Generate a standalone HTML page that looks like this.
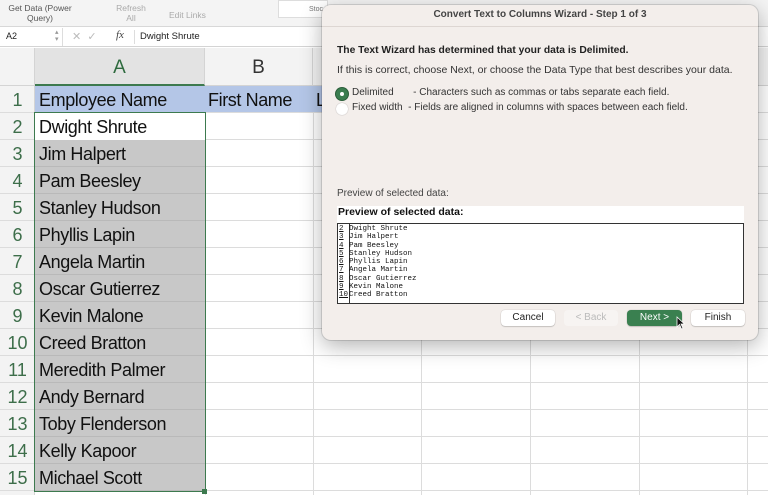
<!DOCTYPE html>
<html><head><style>
*{margin:0;padding:0;box-sizing:border-box}
body{width:768px;height:495px;overflow:hidden;background:#fff;font-family:"Liberation Sans",sans-serif;position:relative}
.abs{position:absolute}
.cell{position:absolute;font-family:"Liberation Sans",sans-serif;font-size:18px;letter-spacing:-0.4px;color:#111;line-height:29px;white-space:nowrap}
.rn{position:absolute;left:0;width:35px;text-align:center;font-family:"Liberation Sans",sans-serif;font-size:18px;color:#3d6e4a;line-height:29px}
.pv{font-family:"Liberation Mono",monospace;font-size:7.5px;line-height:8.3px;color:#111;white-space:pre}
.btn{position:absolute;top:310px;height:16px;border-radius:4px;background:#fff;font-size:10px;text-align:center;line-height:16px;color:#222;box-shadow:0 0 1px rgba(0,0,0,.3),0 1px 1px rgba(0,0,0,.15)}
</style></head><body>
<div class="abs" style="left:0;top:0;width:768px;height:27px;background:#f4f4f4;border-bottom:1px solid #d8d8d8"></div>
<div class="abs" style="left:0px;top:3px;font-size:8.5px;color:#555;text-align:center;width:80px;line-height:10px;white-space:nowrap">Get Data (Power<br>Query)</div>
<div class="abs" style="left:106px;top:3px;font-size:8.5px;color:#aaa;text-align:center;width:50px;line-height:10px">Refresh<br>All</div>
<div class="abs" style="left:169px;top:10px;font-size:8.5px;color:#aaa">Edit Links</div>
<div class="abs" style="left:278px;top:0;width:50px;height:18px;background:#fff;border:1px solid #ddd;font-size:7px;color:#777;padding:5px 0 0 30px">Stoc</div>
<div class="abs" style="left:0;top:27px;width:768px;height:20px;background:#fff;border-bottom:1px solid #d4d4d4"></div>
<div class="abs" style="left:6px;top:31px;font-size:9px;color:#222">A2</div>
<div class="abs" style="left:55px;top:29px;font-size:7px;color:#999;line-height:7px">▴<br>▾</div>
<div class="abs" style="left:62px;top:28px;width:1px;height:18px;background:#ddd"></div>
<div class="abs" style="left:72px;top:30px;font-size:11px;color:#bbb">✕ &nbsp;✓</div>
<div class="abs" style="left:116px;top:29px;font-size:11px;color:#444;font-family:'Liberation Serif',serif;font-style:italic">fx</div>
<div class="abs" style="left:134px;top:30px;width:1px;height:14px;background:#ddd"></div>
<div class="abs" style="left:140px;top:31px;font-size:9.5px;color:#222">Dwight Shrute</div>
<div class="abs" style="left:0;top:48px;width:768px;height:38px;background:#f3f3f3;border-bottom:1px solid #d4d4d4"></div>
<div class="abs" style="left:0;top:48px;width:35px;height:38px;border-right:1px solid #d4d4d4"></div>
<div class="abs" style="left:35px;top:48px;width:170px;height:38px;background:#e3e3e3;border-bottom:2px solid #3d7a4f;border-right:1px solid #d4d4d4;text-align:center;line-height:40px;font-size:19px;color:#2f6b3f">A</div>
<div class="abs" style="left:205px;top:48px;width:108px;height:38px;border-right:1px solid #d4d4d4;text-align:center;line-height:40px;font-size:19px;color:#333">B</div>
<div class="abs" style="left:0;top:86px;width:35px;height:409px;background:#f3f3f3;border-right:1px solid #d4d4d4"></div>
<svg class="abs" style="left:0;top:86px" width="768" height="409">
<g stroke="#dcdcdc" stroke-width="1">
<line x1="313.5" y1="0" x2="313.5" y2="409"/><line x1="421.5" y1="0" x2="421.5" y2="409"/><line x1="530.5" y1="0" x2="530.5" y2="409"/><line x1="639.5" y1="0" x2="639.5" y2="409"/><line x1="747.5" y1="0" x2="747.5" y2="409"/><line x1="205.5" y1="0" x2="205.5" y2="409"/>
<line x1="0" y1="26.5" x2="768" y2="26.5"/><line x1="0" y1="53.5" x2="768" y2="53.5"/><line x1="0" y1="80.5" x2="768" y2="80.5"/><line x1="0" y1="107.5" x2="768" y2="107.5"/><line x1="0" y1="134.5" x2="768" y2="134.5"/><line x1="0" y1="161.5" x2="768" y2="161.5"/><line x1="0" y1="188.5" x2="768" y2="188.5"/><line x1="0" y1="215.5" x2="768" y2="215.5"/><line x1="0" y1="242.5" x2="768" y2="242.5"/><line x1="0" y1="269.5" x2="768" y2="269.5"/><line x1="0" y1="296.5" x2="768" y2="296.5"/><line x1="0" y1="323.5" x2="768" y2="323.5"/><line x1="0" y1="350.5" x2="768" y2="350.5"/><line x1="0" y1="377.5" x2="768" y2="377.5"/><line x1="0" y1="404.5" x2="768" y2="404.5"/>
</g></svg>
<div class="abs" style="left:35px;top:86px;width:300px;height:26px;background:#b4c6e7"></div>
<div class="abs" style="left:35px;top:113px;width:170px;height:27px;background:#fff"></div>
<div class="abs" style="left:35px;top:140px;width:170px;height:351px;background:repeating-linear-gradient(#c8c8c8 0 26px,#b9b9b9 26px 27px)"></div>
<div class="abs" style="left:34px;top:112px;width:172px;height:380px;border:1.5px solid #3d7a4f"></div>
<div class="abs" style="left:202px;top:489px;width:5px;height:5px;background:#3d7a4f"></div>

<div class="rn" style="top:86px">1</div><div class="rn" style="top:113px">2</div><div class="rn" style="top:140px">3</div><div class="rn" style="top:167px">4</div><div class="rn" style="top:194px">5</div><div class="rn" style="top:221px">6</div><div class="rn" style="top:248px">7</div><div class="rn" style="top:275px">8</div><div class="rn" style="top:302px">9</div><div class="rn" style="top:329px">10</div><div class="rn" style="top:356px">11</div><div class="rn" style="top:383px">12</div><div class="rn" style="top:410px">13</div><div class="rn" style="top:437px">14</div><div class="rn" style="top:464px">15</div>

<div class="cell" style="left:39px;top:86px">Employee Name</div>
<div class="cell" style="left:208px;top:86px">First Name</div>
<div class="cell" style="left:316px;top:86px">L</div>
<div class="cell" style="left:39px;top:113px">Dwight Shrute</div>
<div class="cell" style="left:39px;top:140px">Jim Halpert</div>
<div class="cell" style="left:39px;top:167px">Pam Beesley</div>
<div class="cell" style="left:39px;top:194px">Stanley Hudson</div>
<div class="cell" style="left:39px;top:221px">Phyllis Lapin</div>
<div class="cell" style="left:39px;top:248px">Angela Martin</div>
<div class="cell" style="left:39px;top:275px">Oscar Gutierrez</div>
<div class="cell" style="left:39px;top:302px">Kevin Malone</div>
<div class="cell" style="left:39px;top:329px">Creed Bratton</div>
<div class="cell" style="left:39px;top:356px">Meredith Palmer</div>
<div class="cell" style="left:39px;top:383px">Andy Bernard</div>
<div class="cell" style="left:39px;top:410px">Toby Flenderson</div>
<div class="cell" style="left:39px;top:437px">Kelly Kapoor</div>
<div class="cell" style="left:39px;top:464px">Michael Scott</div>

<div class="abs" style="left:322px;top:5px;width:436px;height:335px;background:#f3eeeb;border-radius:9px;box-shadow:0 6px 22px rgba(0,0,0,.3),0 0 0 1px rgba(0,0,0,.12)"></div>
<div class="abs" style="left:322px;top:26px;width:436px;height:1px;background:#ddd6d2"></div>
<div class="abs" style="left:322px;top:9px;width:436px;text-align:center;font-size:10px;font-weight:bold;color:#444">Convert Text to Columns Wizard - Step 1 of 3</div>
<div class="abs" style="left:337px;top:45px;font-size:10.3px;font-weight:bold;color:#222;white-space:nowrap">The Text Wizard has determined that your data is Delimited.</div>
<div class="abs" style="left:337px;top:64px;font-size:10.5px;color:#333;white-space:nowrap">If this is correct, choose Next, or choose the Data Type that best describes your data.</div>
<div class="abs" style="left:336px;top:88px;width:12px;height:12px;border-radius:50%;background:#3a7d4f;box-shadow:0 0 0 1px #2b5e3a"></div>
<div class="abs" style="left:340px;top:92px;width:4px;height:4px;border-radius:50%;background:#fff"></div>
<div class="abs" style="left:336px;top:103px;width:12px;height:12px;border-radius:50%;background:#fff;box-shadow:0 0 1px rgba(0,0,0,.4)"></div>
<div class="abs" style="left:352px;top:87px;font-size:10px;color:#333;white-space:pre">Delimited       - Characters such as commas or tabs separate each field.</div>
<div class="abs" style="left:352px;top:102px;font-size:10px;color:#333;white-space:pre">Fixed width  - Fields are aligned in columns with spaces between each field.</div>
<div class="abs" style="left:337px;top:188px;font-size:10px;color:#444">Preview of selected data:</div>
<div class="abs" style="left:337px;top:206px;width:407px;height:17px;background:#fff"></div>
<div class="abs" style="left:338px;top:206px;font-size:10.5px;font-weight:bold;color:#111">Preview of selected data:</div>
<div class="abs" style="left:337px;top:223px;width:407px;height:81px;background:#fff;border:1px solid #333;overflow:hidden">
<div class="abs" style="left:0;top:0;width:12px;height:80px;border-right:1px solid #333"></div>
<div class="pv abs" style="left:1px;top:1px;text-decoration:underline">2
3
4
5
6
7
8
9
10</div>
<div class="pv abs" style="left:11px;top:1px">Dwight Shrute
Jim Halpert
Pam Beesley
Stanley Hudson
Phyllis Lapin
Angela Martin
Oscar Gutierrez
Kevin Malone
Creed Bratton</div>
</div>
<div class="btn" style="left:501px;width:54px">Cancel</div>
<div class="btn" style="left:564px;width:54px;color:#bbb;background:#f7f4f2;box-shadow:none">&lt; Back</div>
<div class="btn" style="left:627px;width:55px;background:#3a8050;color:#fff">Next &gt;</div>
<div class="btn" style="left:691px;width:54px">Finish</div>
<svg class="abs" style="left:676px;top:316px" width="10" height="14"><path d="M1 1 L1 11 L3.5 8.5 L5.5 13 L7 12.3 L5 8 L8.5 8 Z" fill="#111" stroke="#fff" stroke-width=".8"/></svg>
</body></html>
